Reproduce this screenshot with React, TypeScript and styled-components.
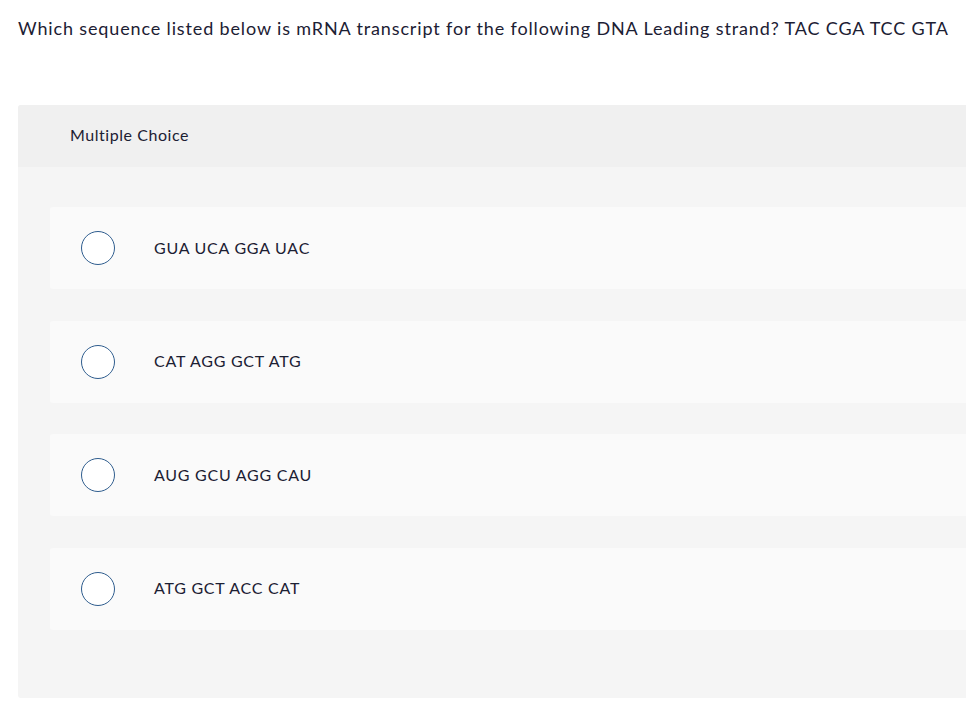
import React from "react";
import styled, { createGlobalStyle } from "styled-components";

const GlobalStyle = createGlobalStyle`
  html, body {
    margin: 0;
    padding: 0;
    background: #ffffff;
    overflow: hidden;
  }
  body {
    font-family: "Lato", "Open Sans", sans-serif;
    color: #1c2033;
  }
`;

const Page = styled.div`
  padding: 14px 0 0 18px;
  width: 1100px;
`;

const Question = styled.p`
  margin: 0;
  font-size: 18px;
  line-height: 28px;
  letter-spacing: 0.86px;
  color: #1c2033;
`;

const Panel = styled.section`
  margin-top: 63px;
  background: #f5f5f5;
  border-radius: 3px;
  overflow: hidden;
`;

const PanelHeader = styled.div`
  height: 62px;
  display: flex;
  align-items: center;
  padding: 0 0 3px 52px;
  box-sizing: border-box;
  background: #f0f0f0;
  font-size: 16px;
  letter-spacing: 0.55px;
  color: #1c2033;
`;

const Choices = styled.div`
  display: flex;
  flex-direction: column;
  gap: 31.5px;
  padding: 40px 0 68px 32px;
`;

const Choice = styled.label`
  height: 82px;
  display: flex;
  align-items: center;
  background: #fafafa;
  border-radius: 3px 0 0 3px;
  cursor: pointer;
`;

const Radio = styled.span`
  box-sizing: border-box;
  width: 34px;
  height: 34px;
  margin-left: 31px;
  border-radius: 50%;
  border: 1.5px solid #2f5d8e;
  background: #ffffff;
  flex-shrink: 0;
`;

const ChoiceText = styled.span`
  margin: 0 0 2px 39px;
  font-size: 16px;
  letter-spacing: 0.75px;
  color: #1c2033;
`;

const options = [
  "GUA UCA GGA UAC",
  "CAT AGG GCT ATG",
  "AUG GCU AGG CAU",
  "ATG GCT ACC CAT",
];

export default function App() {
  return (
    <>
      <GlobalStyle />
      <Page>
        <Question>
          Which sequence listed below is mRNA transcript for the following DNA
          Leading strand? TAC CGA TCC GTA
        </Question>
        <Panel>
          <PanelHeader>Multiple Choice</PanelHeader>
          <Choices>
            {options.map((opt) => (
              <Choice key={opt}>
                <Radio />
                <ChoiceText>{opt}</ChoiceText>
              </Choice>
            ))}
          </Choices>
        </Panel>
      </Page>
    </>
  );
}
